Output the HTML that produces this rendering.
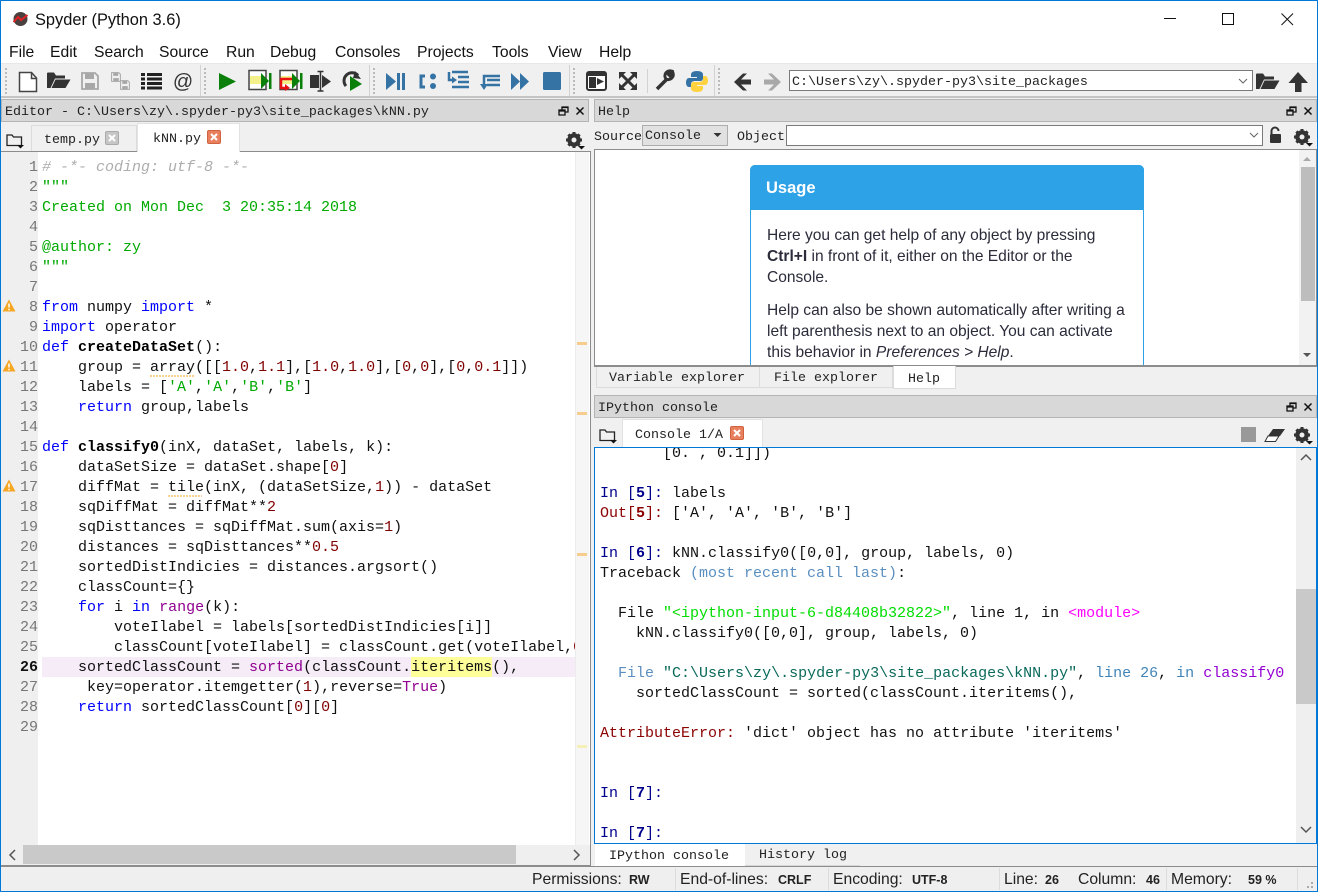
<!DOCTYPE html>
<html><head><meta charset="utf-8"><style>
html,body{margin:0;padding:0;width:1318px;height:892px;overflow:hidden;background:#f0f0f0}
div,pre,span{box-sizing:border-box}
.a{position:absolute}
.t{position:absolute;white-space:pre;font-family:"Liberation Sans",sans-serif;color:#111}
.m{position:absolute;white-space:pre;font-family:"Liberation Mono",monospace;font-size:13.33px;color:#222;line-height:16px}
.menu{top:43px;font-size:15.7px;line-height:20px}
pre{margin:0;position:absolute;font-family:"Liberation Mono",monospace;font-size:15px;line-height:20px;color:#111}
.c{color:#adadad;font-style:italic}.s{color:#00aa00}.k{color:#0000ff}.b{color:#900090}.n{color:#800000}
.st{position:absolute;top:871px;font-size:15.7px;line-height:18px;white-space:pre;font-family:"Liberation Sans",sans-serif;color:#222}
.st b{font-size:12.5px}
.h{position:absolute;left:767px;font-size:15.55px;line-height:20px;white-space:pre;font-family:"Liberation Sans",sans-serif;color:#2b2b3a}
.title{position:absolute;background:#d8d8d8;border:1px solid #b4b4b4;height:23px}
</style></head><body>
<div class="a" style="left:0;top:0;width:1318px;height:63px;background:#fff"></div>
<div class="a" style="left:0;top:63px;width:1318px;height:1px;background:#e8e8e8"></div>
<div class="a" style="left:0;top:96px;width:1318px;height:2px;background:#c4c4c4"></div>

<!-- title + menu -->
<div class="t" style="left:35px;top:10px;font-size:16.4px;line-height:20px">Spyder (Python 3.6)</div>
<div class="t menu" style="left:9px">File</div><div class="t menu" style="left:50px">Edit</div><div class="t menu" style="left:94px">Search</div><div class="t menu" style="left:159px">Source</div><div class="t menu" style="left:226px">Run</div><div class="t menu" style="left:270px">Debug</div><div class="t menu" style="left:335px">Consoles</div><div class="t menu" style="left:417px">Projects</div><div class="t menu" style="left:492px">Tools</div><div class="t menu" style="left:548px">View</div><div class="t menu" style="left:599px">Help</div>

<!-- panel titles -->
<div class="title" style="left:1px;top:99px;width:588px"></div>
<div class="title" style="left:594px;top:99px;width:723px"></div>
<div class="title" style="left:594px;top:395px;width:723px"></div>
<div class="m" style="left:5px;top:105px">Editor - C:\Users\zy\.spyder-py3\site_packages\kNN.py</div>
<div class="m" style="left:598px;top:105px">Help</div>
<div class="m" style="left:598px;top:401px">IPython console</div>

<!-- editor tabs -->
<div class="a" style="left:31px;top:125px;width:106px;height:26px;background:#f0f0f0;border:1px solid #dcdcdc;border-bottom:0"></div>
<div class="a" style="left:137px;top:123px;width:103px;height:29px;background:#fff;border:1px solid #e2e2e2;border-bottom:0;z-index:3"></div>
<div class="m" style="left:44px;top:133px">temp.py</div>
<div class="m" style="left:153px;top:132px;z-index:4">kNN.py</div>

<!-- editor frame -->
<div class="a" style="left:1px;top:151px;width:590px;height:715px;border:1px solid #8c8c8c;background:#fff;border-left:0"></div>
<div class="a" style="left:1px;top:152px;width:37px;height:693px;background:#efefef"></div>
<div class="a" style="left:575px;top:152px;width:14px;height:693px;background:#f6f6f6;border-left:1px solid #ececec"></div>
<div class="a" style="left:42px;top:657px;width:533px;height:20px;background:#f6ecf8"></div>
<div class="a" style="left:411px;top:657px;width:81px;height:20px;background:#ffff99"></div>
<div class="a" style="left:1px;top:845px;width:589px;height:20px;background:#efefef"></div>
<div class="a" style="left:23px;top:845px;width:493px;height:19px;background:#c9c9c9"></div>
<div class="a" style="left:577px;top:342px;width:10px;height:3px;background:#f6cd8c"></div>
<div class="a" style="left:577px;top:412px;width:10px;height:3px;background:#f6cd8c"></div>
<div class="a" style="left:577px;top:553px;width:10px;height:3px;background:#f6cd8c"></div>
<div class="a" style="left:577px;top:745px;width:10px;height:3px;background:#f5f0b8"></div>

<pre style="left:0;top:158px;width:38px;text-align:right;color:#777;z-index:2">1
2
3
4
5
6
7
8
9
10
11
12
13
14
15
16
17
18
19
20
21
22
23
24
25
<b style="color:#111">26</b>
27
28
29</pre>
<div class="a" style="left:42px;top:152px;width:533px;height:693px;overflow:hidden">
<pre style="left:0;top:6px"><span class="c"># -*- coding: utf-8 -*-</span>
<span class="s">"""
Created on Mon Dec  3 20:35:14 2018

@author: zy
"""</span>

<span class="k">from</span> numpy <span class="k">import</span> *
<span class="k">import</span> operator
<span class="k">def</span> <b style="color:#000">createDataSet</b>():
    group = array([[<span class="n">1.0</span>,<span class="n">1.1</span>],[<span class="n">1.0</span>,<span class="n">1.0</span>],[<span class="n">0</span>,<span class="n">0</span>],[<span class="n">0</span>,<span class="n">0.1</span>]])
    labels = [<span class="s">'A'</span>,<span class="s">'A'</span>,<span class="s">'B'</span>,<span class="s">'B'</span>]
    <span class="k">return</span> group,labels

<span class="k">def</span> <b style="color:#000">classify0</b>(inX, dataSet, labels, k):
    dataSetSize = dataSet.shape[<span class="n">0</span>]
    diffMat = tile(inX, (dataSetSize,<span class="n">1</span>)) - dataSet
    sqDiffMat = diffMat**<span class="n">2</span>
    sqDisttances = sqDiffMat.sum(axis=<span class="n">1</span>)
    distances = sqDisttances**<span class="n">0.5</span>
    sortedDistIndicies = distances.argsort()
    classCount={}
    <span class="k">for</span> i <span class="k">in</span> <span class="b">range</span>(k):
        voteIlabel = labels[sortedDistIndicies[i]]
        classCount[voteIlabel] = classCount.get(voteIlabel,<span class="n">0</span>) + <span class="n">1</span>
    sortedClassCount = <span class="b">sorted</span>(classCount.iteritems(),
     key=operator.itemgetter(<span class="n">1</span>),reverse=<span class="b">True</span>)
    <span class="k">return</span> sortedClassCount[<span class="n">0</span>][<span class="n">0</span>]</pre></div>

<!-- help pane -->
<div class="m" style="left:594px;top:130px">Source</div>
<div class="a" style="left:642px;top:125px;width:86px;height:21px;background:#e1e1e1;border:1px solid #adadad"></div>
<div class="m" style="left:645px;top:129px">Console</div>
<div class="m" style="left:737px;top:130px">Object</div>
<div class="a" style="left:786px;top:125px;width:477px;height:21px;background:#fff;border:1px solid #7a7a7a"></div>
<div class="a" style="left:594px;top:149px;width:723px;height:218px;background:#fff;border:1px solid #8c8c8c;border-bottom:2px solid #8c8c8c"></div>
<div class="a" style="left:1299px;top:150px;width:17px;height:215px;background:#f2f2f2"></div>
<div class="a" style="left:1301px;top:167px;width:14px;height:134px;background:#bdbdbd"></div>
<div class="a" style="left:750px;top:165px;width:394px;height:200px;background:#fff;border:1px solid #2ea2e6;border-bottom:0;border-radius:5px 5px 0 0"></div>
<div class="a" style="left:750px;top:165px;width:394px;height:45px;background:#2ea2e6;border-radius:5px 5px 0 0"></div>
<div class="t" style="left:766px;top:178px;font-size:16.5px;line-height:20px;color:#fff;font-weight:bold">Usage</div>
<div class="h" style="top:226px">Here you can get help of any object by pressing</div>
<div class="h" style="top:247px"><b>Ctrl+I</b> in front of it, either on the Editor or the</div>
<div class="h" style="top:268px">Console.</div>
<div class="h" style="top:301px">Help can also be shown automatically after writing a</div>
<div class="h" style="top:322px">left parenthesis next to an object. You can activate</div>
<div class="h" style="top:343px">this behavior in <i>Preferences &gt; Help</i>.</div>

<!-- help tabs -->
<div class="a" style="left:596px;top:367px;width:164px;height:21px;background:#f0f0f0;border:1px solid #dcdcdc;border-top:0"></div>
<div class="a" style="left:760px;top:367px;width:133px;height:21px;background:#f0f0f0;border:1px solid #dcdcdc;border-top:0;border-left:0"></div>
<div class="a" style="left:893px;top:366px;width:63px;height:23px;background:#fff;border:1px solid #dcdcdc;border-top:0"></div>
<div class="m" style="left:609px;top:371px">Variable explorer</div>
<div class="m" style="left:774px;top:371px">File explorer</div>
<div class="m" style="left:908px;top:372px">Help</div>

<!-- console -->
<div class="a" style="left:622px;top:419px;width:141px;height:29px;background:#fff;border:1px solid #e2e2e2;border-bottom:0"></div>
<div class="m" style="left:635px;top:428px">Console 1/A</div>
<div class="a" style="left:594px;top:447px;width:723px;height:397px;background:#fff;border:1px solid #0078d7;overflow:hidden"></div>
<div class="a" style="left:1296px;top:448px;width:20px;height:395px;background:#efefef"></div>
<div class="a" style="left:1296px;top:589px;width:20px;height:115px;background:#c9c9c9"></div>
<div class="a" style="left:595px;top:448px;width:701px;height:395px;overflow:hidden">
<pre style="left:5px;top:-4px">       [0. , 0.1]])

<span style="color:#00008b">In [<b>5</b>]:</span> labels
<span style="color:#8b0000">Out[<b>5</b>]:</span> ['A', 'A', 'B', 'B']

<span style="color:#00008b">In [<b>6</b>]:</span> kNN.classify0([0,0], group, labels, 0)
Traceback <span style="color:#5a8fc0">(most recent call last)</span>:

  File <span style="color:#00dd00">"&lt;ipython-input-6-d84408b32822&gt;"</span>, line 1, in <span style="color:#ff00ff">&lt;module&gt;</span>
    kNN.classify0([0,0], group, labels, 0)

  <span style="color:#5a8fc0">File</span> <span style="color:#0a6a5a">"C:\Users\zy\.spyder-py3\site_packages\kNN.py"</span>, <span style="color:#3f84b8">line 26</span>, <span style="color:#3f84b8">in</span> <span style="color:#9400d3">classify0</span>
    sortedClassCount = sorted(classCount.iteritems(),

<span style="color:#8b0000">AttributeError:</span> 'dict' object has no attribute 'iteritems'


<span style="color:#00008b">In [<b>7</b>]:</span>

<span style="color:#00008b">In [<b>7</b>]:</span></pre></div>

<!-- console bottom tabs -->
<div class="a" style="left:595px;top:844px;width:150px;height:22px;background:#fff"></div>
<div class="a" style="left:745px;top:865px;width:115px;height:1px;background:#d8d8d8"></div>
<div class="m" style="left:609px;top:849px">IPython console</div>
<div class="m" style="left:759px;top:848px">History log</div>

<!-- toolbar combo -->
<div class="a" style="left:789px;top:70px;width:464px;height:21px;background:#fff;border:1px solid #7a7a7a"></div>
<div class="m" style="left:792px;top:75px">C:\Users\zy\.spyder-py3\site_packages</div>

<!-- status -->
<div class="a" style="left:0;top:866px;width:1318px;height:26px;background:#efefef;border-top:1px solid #8c8c8c"></div>
<div class="a" style="left:0;top:865px;width:591px;height:1px;background:#8c8c8c"></div>
<div class="st" style="left:532px">Permissions:</div><div class="st" style="left:629px"><b>RW</b></div>
<div class="st" style="left:680px">End-of-lines:</div><div class="st" style="left:778px"><b>CRLF</b></div>
<div class="st" style="left:833px">Encoding:</div><div class="st" style="left:912px"><b>UTF-8</b></div>
<div class="st" style="left:1004px">Line:</div><div class="st" style="left:1045px"><b>26</b></div>
<div class="st" style="left:1078px">Column:</div><div class="st" style="left:1146px"><b>46</b></div>
<div class="st" style="left:1171px">Memory:</div><div class="st" style="left:1248px"><b>59 %</b></div>
<div class="a" style="left:675px;top:868px;width:1px;height:22px;background:#dcdcdc"></div>
<div class="a" style="left:828px;top:868px;width:1px;height:22px;background:#dcdcdc"></div>
<div class="a" style="left:999px;top:868px;width:1px;height:22px;background:#dcdcdc"></div>
<div class="a" style="left:1166px;top:868px;width:1px;height:22px;background:#dcdcdc"></div>
<div class="a" style="left:1297px;top:868px;width:1px;height:22px;background:#dcdcdc"></div>

<!-- window border -->
<div class="a" style="left:0;top:0;width:1318px;height:892px;border:1px solid #0078d7;z-index:6"></div>

<!-- icons -->
<svg class="a" style="left:0;top:0;z-index:5" width="1318" height="892" viewBox="0 0 1318 892" xmlns="http://www.w3.org/2000/svg">
<defs>
<g id="gear"><circle r="5" fill="none" stroke="#333" stroke-width="3.500"/><path stroke="#333" stroke-width="3" d="M0-8V8M-8 0H8M-5.600-5.600 5.600 5.600M5.600-5.600-5.600 5.600"/><circle r="2.500" fill="#f0f0f0"/><path fill="#111" d="M4 6h7l-3.500 3.500z"/></g>
<g id="folder"><path fill="#333" d="M-11 8 -11-6.500q0-1 1-1h6l2 3h9v3H-3L-7.500 8zM-6.500 8-2.500-.5h15L7.500 8z"/></g>
<g id="tabfolder"><path fill="none" stroke="#222" stroke-width="1.300" d="M-7-5h5l1.500 2h8v8.500h-14.500z"/><path fill="#111" d="M3 5h7l-3.500 3.500z"/></g>
<g id="closeg"><rect x="-6.500" y="-6.500" width="13" height="13" rx="1.500" fill="#c6c6c6" stroke="#aaa"/><path stroke="#fff" stroke-width="2" d="M-3-3 3 3M3-3-3 3"/></g>
<g id="closer"><rect x="-6.500" y="-6.500" width="13" height="13" rx="1.500" fill="#e9805d" stroke="#d0633f"/><path stroke="#fff" stroke-width="2" d="M-3-3 3 3M3-3-3 3"/></g>
<g id="warn"><path fill="#f5a623" d="M0-6.500 6.500 5.500H-6.500z"/><path stroke="#fff" stroke-width="1.500" d="M0-2.500V1.500M0 2.800V4.300"/></g>
<g id="undock"><path fill="none" stroke="#111" stroke-width="1.300" d="M-4-1h6v5h-6zM-1-1V-4H5V1H2"/><path stroke="#111" stroke-width="1.300" d="M-4 0h6M-1-3.500h6"/></g>
<g id="xs"><path stroke="#111" stroke-width="1.500" d="M-3.500-3.500 3.500 3.500M3.500-3.500-3.500 3.500"/></g>
<g id="save"><path fill="none" stroke="currentColor" stroke-width="1.800" d="M-8-8H5L8-5V8H-8z"/><path fill="currentColor" d="M-5-8H4v6H-5zM-5 2H5V8H-5z"/></g>
</defs>

<!-- app logo -->
<circle cx="20.500" cy="19" r="7" fill="#4a4040"/><path stroke="#e02020" stroke-width="2" fill="none" d="M13.500 22 18 17l3 3 6.500-5"/>

<!-- window controls -->
<path stroke="#111" d="M1164 18.500h12" stroke-width="1"/><rect x="1222.500" y="13.500" width="11" height="11" fill="none" stroke="#111"/><path stroke="#111" d="M1281.500 13.500 1293 25M1293 13.500 1281.500 25" fill="none"/>

<!-- toolbar grips and separators -->
<path stroke="#bbb" stroke-width="2" stroke-dasharray="2 2" d="M6 68V94M205 68V94M374 68V94M574 68V94M719 68V94"/>
<path stroke="#d2d2d2" d="M200.500 65V96M369.500 65V96M569.500 65V96M714.500 65V96M647.500 69V93"/>

<!-- file icons -->
<path fill="#fff" stroke="#444" stroke-width="1.500" d="M19.500 72.500h12l5 5.500v13.500h-17zM31.500 72.500v6h5"/>
<use href="#folder" x="58" y="80"/>
<g color="#a8a8a8"><use href="#save" x="90" y="81"/></g>
<g color="#a8a8a8" transform="translate(116 77) scale(.55)"><use href="#save"/></g><g color="#a8a8a8" transform="translate(125 85) scale(.55)"><use href="#save"/></g>
<path stroke="#222" stroke-width="3" d="M141 74.500h4M141 79h4M141 83.500h4M141 88h4M147 74.500h15M147 79h15M147 83.500h15M147 88h15"/>
<text x="183" y="88" text-anchor="middle" font-family="Liberation Sans" font-size="20" fill="#333">@</text>

<!-- run icons -->
<path fill="#0a800a" d="M219 73 236 81.500 219 90z"/>
<rect x="249" y="70.500" width="17" height="19" fill="#fff" stroke="#444" stroke-width="1.500"/><rect x="250" y="76" width="13" height="8" fill="#f4f08a"/><path fill="#0a800a" d="M261 73 269 81 261 89zM269 73h2.500v16H269z"/>
<rect x="280" y="70.500" width="17" height="19" fill="#fff" stroke="#444" stroke-width="1.500"/><rect x="281" y="76" width="13" height="8" fill="#f4f08a"/><path fill="#0a800a" d="M292 73 300 81 292 89zM300 73h2.500v16H300z"/><path fill="none" stroke="#e81010" stroke-width="2.500" d="M292 79H281v9h5"/><path fill="#e81010" d="M285 84l5 4-5 3z"/>
<path fill="#333" d="M310 75h9v13h-9zM322 75l9 6.500-9 6.500z"/><path stroke="#333" stroke-width="1.500" d="M320.500 72V91M317.500 71.500h6M317.500 91h6"/>
<path fill="none" stroke="#333" stroke-width="3" d="M358 75.500A7.500 7.500 0 1 0 346 86"/><path fill="#333" d="M355 71 361 79 353 78z"/><path fill="#0a800a" d="M350 76 362 84 350 91z"/>

<!-- debug icons -->
<path fill="#3673a5" d="M386 73 396 81.500 386 90zM397 73h3v17h-3zM402 73h3v17h-3z"/>
<path fill="none" stroke="#3673a5" stroke-width="3" d="M425 76h-4v11h4"/><circle cx="433" cy="76.500" r="3" fill="#3673a5"/><circle cx="433" cy="86" r="3" fill="#3673a5"/>
<path fill="none" stroke="#3673a5" stroke-width="2.500" d="M449 72v8h4"/><path fill="#3673a5" d="M452 76.500 457 80 452 83.500z"/><path stroke="#3673a5" stroke-width="2.500" d="M452 72h16M458 77h11M458 82h11M452 87h17"/>
<path fill="none" stroke="#3673a5" stroke-width="2.500" d="M500 76h-16v9"/><path fill="#3673a5" d="M480 84h8l-4 6z"/><path stroke="#3673a5" stroke-width="2.500" d="M487 80h13M487 85h13"/>
<path fill="#3673a5" d="M511 73 520 81.500 511 90zM520 73 529 81.500 520 90z"/>
<rect x="543" y="72" width="18" height="18" rx="1.500" fill="#3673a5"/>

<!-- panes icons -->
<rect x="587" y="72" width="19" height="18" rx="2" fill="#fff" stroke="#333" stroke-width="2"/><path fill="#333" d="M587 72h19v4h-19zM589 77h7v11h-7zM597 78l7 3.500-7 3.500z"/>
<path stroke="#333" stroke-width="3" d="M622 75 634 87M634 75 622 87"/><path fill="#333" d="M619 72h7l-7 7zM637 72v7l-7-7zM619 90v-7l7 7zM637 90h-7l7-7z"/>
<path stroke="#333" stroke-width="3.500" d="M657 89 667 79"/><path fill="none" stroke="#333" stroke-width="3" d="M666 79a5 5 0 0 0 7-6l-3 3-2-2 3-3a5 5 0 0 0-5 8z"/>
<path fill="#3673a5" d="M697 71c-5 0-6 2-6 4v2h6v1h-8c-2 0-3 2-3 4.500s1 4.500 3 4.500h2v-3c0-2 2-3 4-3h5c2 0 3-1 3-3v-3.500c0-2-2-3.500-6-3.500z"/><path fill="#ffd23f" d="M697 92c5 0 6-2 6-4v-2h-6v-1h8c2 0 3-2 3-4.500s-1-4.500-3-4.500h-2v3c0 2-2 3-4 3h-5c-2 0-3 1-3 3v3.500c0 2 2 3.500 6 3.500z"/>

<!-- nav -->
<path fill="#333" d="M734 82 743 73.500h4L741 79.500h10v5h-10L747 90.500h-4z"/>
<path fill="#a8a8a8" d="M781 82 772 73.500h-4L774 79.500h-10v5h10L768 90.500h4z"/>
<path fill="none" stroke="#666" d="M1239 79l4 4 4-4"/>
<use href="#folder" x="1267" y="81"/>
<path fill="#333" d="M1298 72 1308 83h-6.500v9h-6.500v-9h-6.500z"/>

<!-- pane controls -->
<use href="#undock" x="563" y="111"/><use href="#xs" x="580" y="111"/>
<use href="#undock" x="1291" y="111"/><use href="#xs" x="1308" y="111"/>
<use href="#undock" x="1291" y="407"/><use href="#xs" x="1308" y="407"/>

<!-- tab icons -->
<use href="#tabfolder" x="14" y="140"/>
<use href="#closeg" x="112" y="138"/><use href="#closer" x="214" y="137"/>
<use href="#gear" x="574" y="140"/>
<use href="#tabfolder" x="607" y="435"/>
<use href="#closer" x="737" y="433"/>
<rect x="1241" y="427" width="15" height="15" fill="#999"/>
<path fill="#333" d="M1273 429h12l-5 7h-12z"/><path fill="#fff" stroke="#333" d="M1268 436h11l-3.500 5.500h-10.500z"/>
<use href="#gear" x="1302" y="435"/>
<use href="#gear" x="1302" y="137"/>
<path fill="none" stroke="#333" stroke-width="2" d="M1271.500 134v-3a3.500 3.500 0 0 1 7 0"/><rect x="1270" y="134" width="11" height="9" rx="1" fill="#333"/>
<path fill="#333" d="M713.500 133h8l-4 4z"/>
<path fill="none" stroke="#666" d="M1250 133l4 4 4-4"/>

<!-- warnings -->
<use href="#warn" x="9" y="306"/><use href="#warn" x="9" y="366"/><use href="#warn" x="9" y="486"/>
<path fill="none" stroke="#f5a623" stroke-dasharray="2 1" d="M150 376h44M168 496h34"/>

<!-- scroll arrows -->
<path fill="#aaa" d="M1303 161l4-4 4 4z"/><path fill="#555" d="M1303 353h8l-4 4z"/>
<path fill="none" stroke="#555" stroke-width="1.500" d="M1301 460l5-5 5 5M1301 827l5 5 5-5"/>
<path fill="none" stroke="#555" stroke-width="1.500" d="M15 850l-5 5 5 5M574 850l5 5-5 5"/>
<path fill="#aaa" d="M1307 888h2v-2h-2zM1311 888h2v-2h-2zM1311 884h2v-2h-2z"/>
</svg>
</body></html>
